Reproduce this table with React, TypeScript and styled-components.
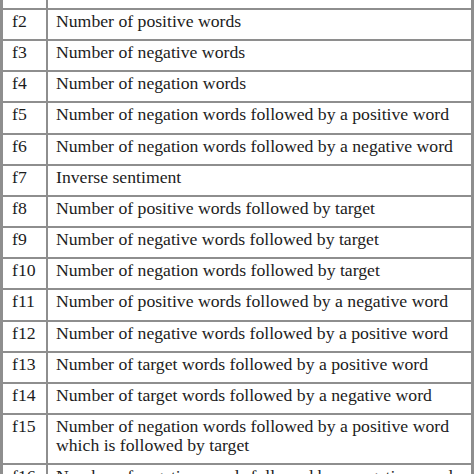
import React from 'react';
import styled, { createGlobalStyle } from 'styled-components';

type Feature = {
  id: string;
  text: string;
  lines?: number;
};

const features: Feature[] = [
  { id: 'f1', text: 'Number of words' },
  { id: 'f2', text: 'Number of positive words' },
  { id: 'f3', text: 'Number of negative words' },
  { id: 'f4', text: 'Number of negation words' },
  { id: 'f5', text: 'Number of negation words followed by a positive word' },
  { id: 'f6', text: 'Number of negation words followed by a negative word' },
  { id: 'f7', text: 'Inverse sentiment' },
  { id: 'f8', text: 'Number of positive words followed by target' },
  { id: 'f9', text: 'Number of negative words followed by target' },
  { id: 'f10', text: 'Number of negation words followed by target' },
  { id: 'f11', text: 'Number of positive words followed by a negative word' },
  { id: 'f12', text: 'Number of negative words followed by a positive word' },
  { id: 'f13', text: 'Number of target words followed by a positive word' },
  { id: 'f14', text: 'Number of target words followed by a negative word' },
  {
    id: 'f15',
    text: 'Number of negation words followed by a positive word which is followed by target',
    lines: 2,
  },
  {
    id: 'f16',
    text: 'Number of negation words followed by a negative word which is followed by target',
    lines: 2,
  },
];

const GlobalStyle = createGlobalStyle`
  html, body {
    margin: 0;
    padding: 0;
    background: #ffffff;
    overflow: hidden;
  }
`;

const App = () => (
  <>
    <GlobalStyle />
    <Page>
      <Table>
        {features.map((f) => (
          <Row key={f.id} lines={f.lines ?? 1}>
            <IdCell>{f.id}</IdCell>
            <DescCell>{f.text}</DescCell>
          </Row>
        ))}
      </Table>
    </Page>
  </>
);

const Page = styled.div`
  width: 474px;
  height: 474px;
  overflow: hidden;
  background: #ffffff;
`;

const Table = styled.div`
  display: flex;
  flex-direction: column;
  width: 474px;
  margin-top: -21.4px;
  box-sizing: border-box;
  border-left: 3px solid #8e8e8e;
  border-right: 3px solid #8e8e8e;
  font-family: 'Liberation Serif', 'Times New Roman', serif;
  font-size: 17.7px;
  line-height: 18.6px;
  color: #1c1c1c;
`;

const Row = styled.div<{ lines: number }>`
  display: grid;
  grid-template-columns: 45px 1fr;
  flex: none;
  height: ${(props) => (props.lines > 1 ? '50px' : '31.2px')};
  box-sizing: border-box;
  border-bottom: 2px solid #8e8e8e;
`;

const IdCell = styled.div`
  padding: 2px 0 0 9px;
  border-right: 2px solid #8e8e8e;
`;

const DescCell = styled.div`
  padding: 2px 6px 0 8px;
`;

export default App;
